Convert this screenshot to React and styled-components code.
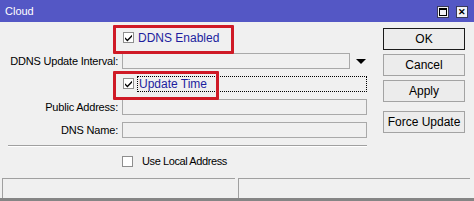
import React from 'react';
import styled, { createGlobalStyle } from 'styled-components';

const GlobalStyle = createGlobalStyle`
    html, body {
        margin: 0;
        padding: 0;
        background: #f0f0f0;
    }
    * {
        box-sizing: border-box;
    }
`;

const CheckMark = () => (
    <svg width="9" height="9" viewBox="0 0 9 9">
        <path d="M1 4.2 L3.4 6.6 L8 1.8 L8 3.8 L3.4 8.4 L1 6 Z" fill="#000" />
    </svg>
);

const CheckField = ({ checked, children, color, mark, focus }) => (
    <CheckLabel $mark={mark}>
        <Box>{checked && <CheckMark />}</Box>
        <CheckText $color={color} $focus={focus}>
            {children}
        </CheckText>
    </CheckLabel>
);

const App = () => {
    return (
        <>
            <GlobalStyle />
            <Window>
                <TitleBar>
                    <span>Cloud</span>
                    <TitleButtons>
                        <TitleButton>
                            <MaxGlyph />
                        </TitleButton>
                        <TitleButton>✕</TitleButton>
                    </TitleButtons>
                </TitleBar>
                <Body>
                    <Form>
                        <Grid>
                            <span />
                            <CheckField checked color="#1d1d9e" mark={115}>
                                DDNS Enabled
                            </CheckField>

                            <Label>DDNS Update Interval:</Label>
                            <SelectRow>
                                <Input />
                                <Arrow />
                            </SelectRow>

                            <span />
                            <CheckField checked color="#1d1d9e" mark={100} focus>
                                Update Time
                            </CheckField>

                            <Label>Public Address:</Label>
                            <Input />

                            <Label>DNS Name:</Label>
                            <Input />
                        </Grid>
                        <Separator />
                        <LocalRow>
                            <CheckField>Use Local Address</CheckField>
                        </LocalRow>
                    </Form>
                    <Buttons>
                        <Button $default>OK</Button>
                        <Button>Cancel</Button>
                        <Button>Apply</Button>
                        <Button $gap>Force Update</Button>
                    </Buttons>
                </Body>
                <StatusBar>
                    <StatusCell />
                    <StatusCell />
                </StatusBar>
            </Window>
        </>
    );
};

const Window = styled.div`
    width: 474px;
    height: 201px;
    display: flex;
    flex-direction: column;
    background: #f0f0f0;
    font-family: 'Liberation Sans', Arial, sans-serif;
    font-size: 11px;
    color: #000;
    border-bottom: 3px solid #858585;
    overflow: hidden;
`;

const TitleBar = styled.div`
    height: 22px;
    flex: none;
    display: flex;
    align-items: center;
    justify-content: space-between;
    padding: 0 6px 0 5px;
    background: #5457c5;
    color: #ffffff;
    font-size: 11px;
`;

const TitleButtons = styled.div`
    display: flex;
    gap: 7px;
    padding-top: 2px;
`;

const TitleButton = styled.div`
    width: 12px;
    height: 12px;
    background: #f2f2f6;
    border: 1px solid #3a3a5a;
    color: #000;
    font-size: 9px;
    font-weight: bold;
    line-height: 10px;
    display: flex;
    align-items: center;
    justify-content: center;
`;

const MaxGlyph = styled.div`
    width: 8px;
    height: 8px;
    border: 1px solid #000;
    border-top-width: 2px;
`;

const Body = styled.div`
    flex: 1;
    display: flex;
`;

const Form = styled.div`
    width: 375px;
    padding-top: 4px;
`;

const Grid = styled.div`
    display: grid;
    grid-template-columns: 118px 245px;
    grid-auto-rows: 23px;
    column-gap: 4px;
    align-items: center;
`;

const Label = styled.span`
    text-align: right;
    white-space: nowrap;
    letter-spacing: -0.2px;
`;

const Input = styled.div`
    height: 16px;
    border: 1px solid #a9a9a9;
    background: #f0f0f0;
`;

const SelectRow = styled.div`
    display: flex;
    align-items: center;
    gap: 6px;
    padding-right: 1px;

    ${Input} {
        flex: 1;
    }
`;

const Arrow = styled.div`
    width: 0;
    height: 0;
    border-left: 5px solid transparent;
    border-right: 5px solid transparent;
    border-top: 5px solid #000;
    margin-top: 1px;
`;

const CheckLabel = styled.label`
    position: relative;
    display: flex;
    align-items: center;
    height: 23px;
    padding-left: 1px;

    ${({ $mark }) =>
        $mark &&
        `
        &::before {
            content: '';
            position: absolute;
            left: -9px;
            top: -1px;
            width: ${$mark}px;
            height: 23px;
            border: 3px solid #cf1a26;
            border-radius: 1px;
            pointer-events: none;
        }
    `}
`;

const Box = styled.span`
    width: 11px;
    height: 11px;
    flex: none;
    background: #ffffff;
    border: 1px solid #8e8e8e;
    display: flex;
    align-items: center;
    justify-content: center;
`;

const CheckText = styled.span`
    margin-left: 3px;
    padding: 1px;
    color: ${({ $color }) => $color || '#000'};
    white-space: nowrap;
    font-size: 12px;

    ${({ $focus }) =>
        $focus &&
        `
        flex: 1;
        height: 16px;
        line-height: 13px;
        border: 1px dotted #000;
    `}
`;

const Separator = styled.div`
    margin: 4px 0 0 8px;
    width: 359px;
    border-top: 1px solid #a0a0a0;
    border-bottom: 1px solid #ffffff;
`;

const LocalRow = styled.div`
    margin: 6px 0 0 121px;
    height: 16px;
    display: flex;
    align-items: center;

    ${CheckLabel} {
        height: 16px;
    }
    ${CheckText} {
        margin-left: 8px;
        font-size: 11px;
        letter-spacing: -0.4px;
    }
`;

const Buttons = styled.div`
    width: 82px;
    margin-left: 8px;
    padding-top: 6px;
    display: flex;
    flex-direction: column;
    gap: 4px;
`;

const Button = styled.div`
    height: 22px;
    margin-top: ${({ $gap }) => ($gap ? '5px' : '0')};
    display: flex;
    align-items: center;
    justify-content: center;
    background: #ececec;
    border: 1px solid ${({ $default }) => ($default ? '#1a1a1a' : '#a3a3a3')};
    font-size: 12px;
`;

const StatusBar = styled.div`
    height: 20px;
    flex: none;
    display: flex;
    gap: 3px;
    padding: 0 4px 0 2px;
`;

const StatusCell = styled.div`
    flex: 1;
    border-top: 1px solid #a0a0a0;
    border-left: 1px solid #a0a0a0;
`;

export default App;
